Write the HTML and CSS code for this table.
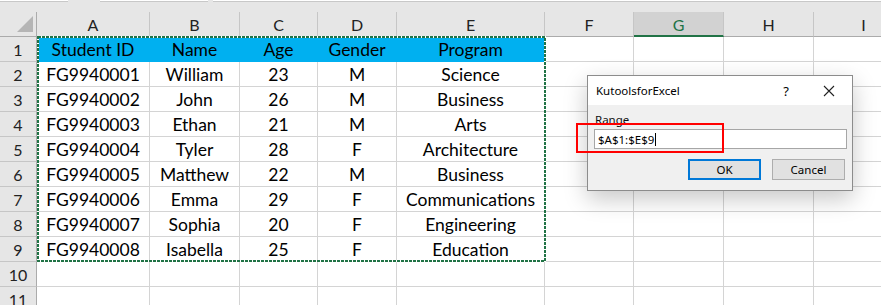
FILE: index.html
```html
<!DOCTYPE html>
<html>
<head>
<meta charset="utf-8">
<link rel="stylesheet" href="styles.css">
</head>
<body>
<div class="page">
  <div class="topstrip">
    <div class="tbox tbox1"></div>
    <div class="tgap"></div>
    <div class="tbox tbox2"></div>
    <div class="tgap2"></div>
    <div class="tbox tbox3"></div>
  </div>
  <div class="sheet">
    <div class="ch corner"><svg width="16" height="16" viewBox="0 0 16 16"><polygon points="0,16 16,0 16,16" fill="#b5b5b5"/></svg></div>
    <div class="ch">A</div><div class="ch">B</div><div class="ch">C</div><div class="ch">D</div><div class="ch">E</div><div class="ch">F</div><div class="ch sel">G</div><div class="ch">H</div><div class="ch last">I</div>

    <div class="rh">1</div>
    <div class="c hl">Student ID</div><div class="c hl">Name</div><div class="c hl">Age</div><div class="c hl">Gender</div><div class="c hl hle">Program</div><div class="c"></div><div class="c"></div><div class="c"></div><div class="c last"></div>

    <div class="rh">2</div>
    <div class="c">FG9940001</div><div class="c">William</div><div class="c">23</div><div class="c">M</div><div class="c">Science</div><div class="c"></div><div class="c"></div><div class="c"></div><div class="c last"></div>

    <div class="rh">3</div>
    <div class="c">FG9940002</div><div class="c">John</div><div class="c">26</div><div class="c">M</div><div class="c">Business</div><div class="c"></div><div class="c"></div><div class="c"></div><div class="c last"></div>

    <div class="rh">4</div>
    <div class="c">FG9940003</div><div class="c">Ethan</div><div class="c">21</div><div class="c">M</div><div class="c">Arts</div><div class="c"></div><div class="c"></div><div class="c"></div><div class="c last"></div>

    <div class="rh">5</div>
    <div class="c">FG9940004</div><div class="c">Tyler</div><div class="c">28</div><div class="c">F</div><div class="c">Architecture</div><div class="c"></div><div class="c"></div><div class="c"></div><div class="c last"></div>

    <div class="rh">6</div>
    <div class="c">FG9940005</div><div class="c">Matthew</div><div class="c">22</div><div class="c">M</div><div class="c">Business</div><div class="c"></div><div class="c"></div><div class="c"></div><div class="c last"></div>

    <div class="rh">7</div>
    <div class="c">FG9940006</div><div class="c">Emma</div><div class="c">29</div><div class="c">F</div><div class="c">Communications</div><div class="c"></div><div class="c"></div><div class="c"></div><div class="c last"></div>

    <div class="rh">8</div>
    <div class="c">FG9940007</div><div class="c">Sophia</div><div class="c">20</div><div class="c">F</div><div class="c">Engineering</div><div class="c"></div><div class="c"></div><div class="c"></div><div class="c last"></div>

    <div class="rh">9</div>
    <div class="c">FG9940008</div><div class="c">Isabella</div><div class="c">25</div><div class="c">F</div><div class="c">Education</div><div class="c"></div><div class="c"></div><div class="c"></div><div class="c last"></div>

    <div class="rh">10</div>
    <div class="c"></div><div class="c"></div><div class="c"></div><div class="c"></div><div class="c"></div><div class="c"></div><div class="c"></div><div class="c"></div><div class="c last"></div>

    <div class="rh">11</div>
    <div class="c"></div><div class="c"></div><div class="c"></div><div class="c"></div><div class="c"></div><div class="c"></div><div class="c"></div><div class="c"></div><div class="c last"></div>
  </div>

  <svg class="ants" width="509" height="226" viewBox="0 0 509 226">
    <rect x="1" y="1" width="507" height="224" fill="none" stroke="#ffffff" stroke-width="2"/>
    <rect x="1" y="1" width="507" height="224" fill="none" stroke="#217346" stroke-width="2" stroke-dasharray="3 1"/>
  </svg>

  <div class="dialog">
    <div class="titlebar">
      <span class="dtitle">KutoolsforExcel</span>
      <span class="help">?</span>
      <span class="close"><svg width="12" height="12" viewBox="0 0 12 12"><path d="M1 1 L11 11 M11 1 L1 11" stroke="#222" stroke-width="1.1" fill="none"/></svg></span>
    </div>
    <div class="dbody">
      <div class="dlabel">Range</div>
      <div class="dinput"><span class="dval">$A$1:$E$9</span><span class="caret"></span></div>
      <div class="dbtns">
        <div class="btn ok">OK</div>
        <div class="btn">Cancel</div>
      </div>
    </div>
  </div>

  <div class="redbox"></div>
</div>
</body>
</html>
```

FILE: styles.css
```css
html, body {
  margin: 0;
  padding: 0;
  background: #ffffff;
}
.page {
  position: relative;
  width: 881px;
  height: 305px;
  overflow: hidden;
}
.topstrip {
  height: 12px;
  background: #e6e6e6;
  display: flex;
  align-items: flex-start;
  box-sizing: border-box;
}
.tbox {
  height: 1px;
  background: #ffffff;
  border-bottom: 1px solid #c8c8c8;
}
.tbox1 { width: 68px; }
.tgap { width: 32px; }
.tbox2 { width: 108px; }
.tgap2 { width: 5px; }
.tbox3 { flex: 1; }

.sheet {
  display: grid;
  grid-template-columns: 37px 113px 90px 78px 79px 148px 89px 90px 90px 100px;
  grid-template-rows: 25px;
  grid-auto-rows: 25px;
  font-family: "Lato", "Noto Sans", sans-serif;
}
.ch {
  box-sizing: border-box;
  background: #e6e6e6;
  border-right: 1px solid #c6c6c6;
  border-bottom: 1px solid #ababab;
  display: flex;
  align-items: center;
  justify-content: center;
  font-size: 16px;
  color: #222222;
  padding-top: 1px;
}
.ch.corner {
  justify-content: flex-end;
  align-items: flex-end;
  padding: 0 3px 4px 0;
  border-right: 1px solid #ababab;
}
.ch.corner svg { display: block; }
.ch.sel {
  background: #d2d2d2;
  color: #217346;
  border-bottom: 2px solid #217346;
}
.rh {
  box-sizing: border-box;
  background: #e6e6e6;
  border-right: 1px solid #ababab;
  border-bottom: 1px solid #c6c6c6;
  display: flex;
  align-items: center;
  justify-content: center;
  font-size: 16px;
  color: #222222;
}
.c {
  box-sizing: border-box;
  border-right: 1px solid #d4d4d4;
  border-bottom: 1px solid #d4d4d4;
  display: flex;
  align-items: center;
  justify-content: center;
  font-size: 17.5px;
  color: #000000;
  white-space: nowrap;
  padding-top: 1px;
}
.c.hl {
  background: #00b0f0;
  border-right-color: #00b0f0;
  border-bottom-color: #00b0f0;
}
.c.hle { border-right-color: #d4d4d4; }

.ants {
  position: absolute;
  left: 37px;
  top: 36px;
  display: block;
}

.dialog {
  position: absolute;
  left: 587px;
  top: 75px;
  width: 266px;
  height: 116px;
  box-sizing: border-box;
  border: 1px solid #8c8c8c;
  background: #f0f0f0;
  box-shadow: 0 8px 22px rgba(0, 0, 0, 0.22);
  font-family: "Noto Sans", "Open Sans", sans-serif;
  font-size: 11.5px;
  color: #000000;
  display: flex;
  flex-direction: column;
}
.titlebar {
  height: 29px;
  background: #ffffff;
  display: flex;
  align-items: center;
  padding-left: 8px;
  flex: none;
}
.dtitle { flex: 1; }
.help {
  width: 40px;
  text-align: center;
  font-size: 13px;
}
.close {
  width: 46px;
  display: flex;
  justify-content: center;
  align-items: center;
}
.close svg { display: block; }
.dbody {
  padding: 7px 5px 0 6px;
  display: flex;
  flex-direction: column;
}
.dlabel {
  line-height: 16px;
  padding-left: 1px;
  color: #111;
}
.dinput {
  margin-top: 1px;
  height: 20px;
  box-sizing: border-box;
  background: #ffffff;
  border: 1px solid #a6a6a6;
  display: flex;
  align-items: center;
  padding-left: 3px;
}
.caret {
  display: inline-block;
  width: 1px;
  height: 13px;
  background: #000;
  margin-left: 1px;
}
.dbtns {
  margin-top: 10px;
  display: flex;
  justify-content: flex-end;
  gap: 11px;
  padding-right: 2px;
}
.btn {
  width: 73px;
  height: 21px;
  box-sizing: border-box;
  background: #e1e1e1;
  border: 1px solid #adadad;
  display: flex;
  align-items: center;
  justify-content: center;
}
.btn.ok {
  border: 2px solid #0078d7;
}

.redbox {
  position: absolute;
  left: 576px;
  top: 123px;
  width: 148px;
  height: 30px;
  box-sizing: border-box;
  border: 2px solid #ff0000;
}
```
